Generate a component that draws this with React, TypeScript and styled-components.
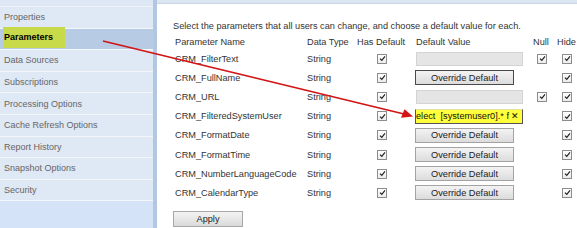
import styled, { createGlobalStyle } from "styled-components";

const GlobalStyle = createGlobalStyle`
  html, body {
    margin: 0;
    padding: 0;
    background: #ffffff;
  }
  body {
    font-family: "Liberation Sans", Arial, sans-serif;
  }
`;

type Row = {
  name: string;
  kind: "field" | "override" | "query";
  nullable?: boolean;
  focused?: boolean;
};

const rows: Row[] = [
  { name: "CRM_FilterText", kind: "field", nullable: true },
  { name: "CRM_FullName", kind: "override", focused: true },
  { name: "CRM_URL", kind: "field", nullable: true },
  { name: "CRM_FilteredSystemUser", kind: "query" },
  { name: "CRM_FormatDate", kind: "override" },
  { name: "CRM_FormatTime", kind: "override" },
  { name: "CRM_NumberLanguageCode", kind: "override" },
  { name: "CRM_CalendarType", kind: "override" },
];

const menu = [
  "Properties",
  "Parameters",
  "Data Sources",
  "Subscriptions",
  "Processing Options",
  "Cache Refresh Options",
  "Report History",
  "Snapshot Options",
  "Security",
];

function Check() {
  return (
    <CheckBox>
      <svg width="7" height="7" viewBox="0 0 7 7">
        <path d="M1 3.6 L2.8 5.4 L6 1.4" fill="none" stroke="#222" strokeWidth="1.2" />
      </svg>
    </CheckBox>
  );
}

export default function App() {
  return (
    <>
      <GlobalStyle />
      <Page>
        <Sidebar>
          <SideTop />
          {menu.map((item) =>
            item === "Parameters" ? (
              <MenuItem key={item} $active>
                <Marker>{item}</Marker>
              </MenuItem>
            ) : (
              <MenuItem key={item}>{item}</MenuItem>
            )
          )}
        </Sidebar>
        <Main>
          <Intro>
            Select the parameters that all users can change, and choose a default value for each.
          </Intro>
          <Grid>
            <Head>Parameter Name</Head>
            <Head>Data Type</Head>
            <Head>Has Default</Head>
            <Head>Default Value</Head>
            <Head>Null</Head>
            <Head>Hide</Head>
            {rows.map((r) => (
              <RowGroup key={r.name}>
                <Cell>{r.name}</Cell>
                <Cell>String</Cell>
                <Cell $pad={20}>
                  <Check />
                </Cell>
                <Cell>
                  {r.kind === "field" && <Disabled />}
                  {r.kind === "override" && (
                    <OverrideButton $focused={r.focused}>Override Default</OverrideButton>
                  )}
                  {r.kind === "query" && (
                    <QueryInput>
                      <QueryText>elect&nbsp; [systemuser0].* f</QueryText>
                      <Clear>✕</Clear>
                    </QueryInput>
                  )}
                </Cell>
                <Cell $pad={4}>{r.nullable && <Check />}</Cell>
                <Cell $pad={5}>
                  <Check />
                </Cell>
              </RowGroup>
            ))}
          </Grid>
          <ApplyButton>Apply</ApplyButton>
        </Main>
        <Arrow width="577" height="228" viewBox="0 0 577 228">
          <line x1="103" y1="41" x2="404" y2="114" stroke="#d21414" strokeWidth="1.8" />
          <polygon points="413,116.5 401,117.8 404.5,109.2" fill="#d21414" />
        </Arrow>
      </Page>
    </>
  );
}

const Page = styled.div`
  position: relative;
  display: flex;
  width: 577px;
  height: 228px;
  overflow: hidden;
  background: #dce6f3;
`;

const Sidebar = styled.div`
  width: 153px;
  flex-shrink: 0;
  display: flex;
  flex-direction: column;
  background: #d5e3f8;
  border-right: 4px solid #b4c7e2;
`;

const SideTop = styled.div`
  height: 6px;
  background: #dde7f5;
  border-bottom: 1px solid #eef3fa;
`;

const MenuItem = styled.div<{ $active?: boolean }>`
  box-sizing: border-box;
  height: 21.6px;
  display: flex;
  align-items: center;
  padding-left: 4px;
  font-size: 9px;
  color: ${(p) => (p.$active ? "#000" : "#666")};
  font-weight: ${(p) => (p.$active ? 700 : 400)};
  background: ${(p) => (p.$active ? "#b8cbe4" : "#dfe8f5")};
  border-bottom: 1px solid #f3f6fb;
`;

const Marker = styled.span`
  display: flex;
  align-items: center;
  height: 21px;
  margin: -3px 0 0 -1px;
  padding: 0 12px 0 1px;
  background: #c8d94a;
`;

const Main = styled.div`
  flex: 1;
  margin-top: 3px;
  background: #ffffff;
  border-top: 1px solid #c9d5e6;
  padding: 15px 0 0 16px;
  font-size: 9.2px;
  color: #333;
`;

const Intro = styled.div`
  height: 14px;
  line-height: 14px;
`;

const Grid = styled.div`
  display: grid;
  grid-template-columns: 132px 50px 59px 117px 24px 1fr;
  grid-template-rows: 13px;
  grid-auto-rows: 19.2px;
  margin: 3px 0 0 2px;
`;

const Head = styled.div`
  line-height: 13px;
  white-space: nowrap;
`;

const RowGroup = styled.div`
  display: contents;
`;

const Cell = styled.div<{ $pad?: number }>`
  display: flex;
  align-items: center;
  padding-left: ${(p) => p.$pad ?? 0}px;
  white-space: nowrap;
`;

const CheckBox = styled.span`
  box-sizing: border-box;
  width: 10px;
  height: 10px;
  border: 1px solid #8c8c8c;
  background: linear-gradient(#ffffff, #ececec);
  display: flex;
  align-items: center;
  justify-content: center;
`;

const Disabled = styled.div`
  box-sizing: border-box;
  width: 107px;
  height: 14px;
  background: #e5e5e5;
  border: 1px solid #d3d3d3;
`;

const OverrideButton = styled.div<{ $focused?: boolean }>`
  box-sizing: border-box;
  width: 99px;
  height: 15px;
  margin-left: -1px;
  display: flex;
  align-items: center;
  justify-content: center;
  border: 1px solid ${(p) => (p.$focused ? "#4a4a4a" : "#a3a3a3")};
  background: linear-gradient(#f3f3f3, #dcdcdc);
  color: #222;
  font-size: 9.2px;
`;

const QueryInput = styled.div`
  box-sizing: border-box;
  width: 108px;
  height: 15px;
  margin-left: -1px;
  display: flex;
  align-items: center;
  justify-content: space-between;
  padding-right: 3px;
  background: #ffff3c;
  border: 1px solid #555;
  border-top-color: #e0e0a0;
`;

const QueryText = styled.span`
  white-space: nowrap;
  color: #111;
`;

const Clear = styled.span`
  font-size: 9px;
  color: #111;
`;

const ApplyButton = styled.div`
  box-sizing: border-box;
  width: 70px;
  height: 16px;
  margin-top: 8px;
  display: flex;
  align-items: center;
  justify-content: center;
  border: 1px solid #a8a8a8;
  background: linear-gradient(#f4f4f4, #dadada);
  color: #222;
  font-size: 9.2px;
`;

const Arrow = styled.svg`
  position: absolute;
  left: 0;
  top: 0;
  pointer-events: none;
`;
